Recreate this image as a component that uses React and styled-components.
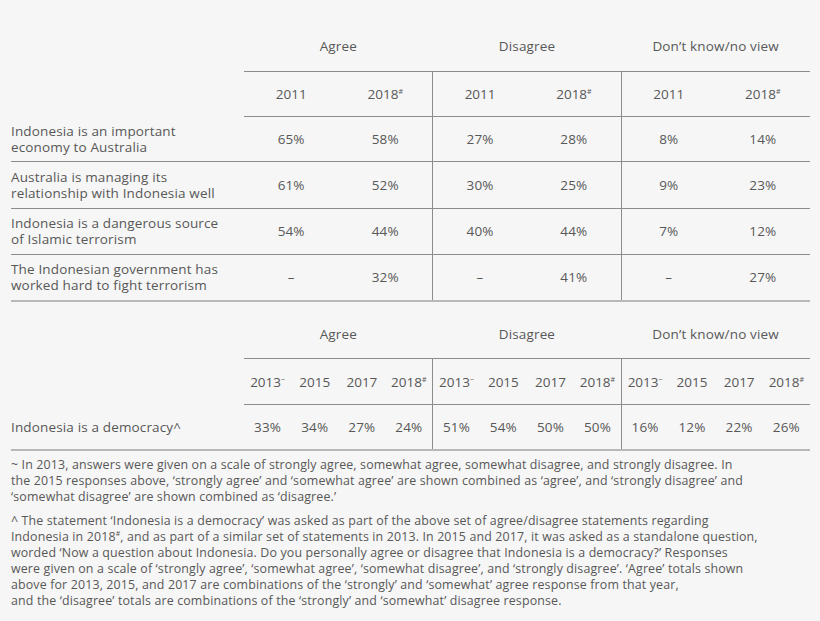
import React from 'react';
import styled, { createGlobalStyle } from 'styled-components';

const GlobalStyle = createGlobalStyle`
  html, body {
    margin: 0;
    padding: 0;
    background: #f6f6f6;
  }
  body {
    font-family: 'Open Sans', 'Liberation Sans', sans-serif;
    color: #585858;
  }
`;

const Page = styled.div`
  width: 820px;
  height: 621px;
  box-sizing: border-box;
  padding: 22px 10px 0 11px;
  overflow: hidden;
`;

const Table = styled.table`
  width: 799px;
  border-collapse: collapse;
  table-layout: fixed;
  font-size: 13.5px;
  letter-spacing: 0.15px;
  margin-bottom: ${(p) => p.$gap || 0}px;
`;

const LabelCol = styled.col`
  width: 233px;
`;

const GroupHead = styled.th`
  height: 48.5px;
  padding: 0;
  font-weight: 400;
  text-align: center;
  border-bottom: 1.5px solid #8c8c8c;
`;

const Blank = styled.th`
  padding: 0;
`;

const YearCell = styled.th`
  height: 44.2px;
  padding: 0;
  font-weight: 400;
  text-align: center;
  white-space: nowrap;
  letter-spacing: 0;
  border-bottom: 1.5px solid #8c8c8c;
  border-left: ${(p) => (p.$split ? '1.5px solid #8c8c8c' : 'none')};
`;

const RowLabel = styled.td`
  height: 45.2px;
  padding: 0;
  line-height: 16px;
  vertical-align: middle;
  white-space: nowrap;
  border-bottom: ${(p) => (p.$last ? '2px solid #b8b8b8' : '1.5px solid #8c8c8c')};
`;

const Cell = styled.td`
  padding: 0;
  text-align: center;
  vertical-align: middle;
  white-space: nowrap;
  border-bottom: ${(p) => (p.$last ? '2px solid #b8b8b8' : '1.5px solid #8c8c8c')};
  border-left: ${(p) => (p.$split ? '1.5px solid #8c8c8c' : 'none')};
`;

const Sup = styled.sup`
  font-size: 7px;
  vertical-align: 5px;
  line-height: 0;
`;

const Notes = styled.div`
  margin-top: 6px;
  font-size: 12.4px;
  letter-spacing: 0.15px;
  line-height: 16px;
`;

const Note = styled.p`
  margin: 0 0 8px;
  white-space: nowrap;
`;

const groups = ['Agree', 'Disagree', 'Don\u2019t know/no view'];

const rows1 = [
  ['Indonesia is an important', 'economy to Australia', ['65%', '58%', '27%', '28%', '8%', '14%']],
  ['Australia is managing its', 'relationship with Indonesia well', ['61%', '52%', '30%', '25%', '9%', '23%']],
  ['Indonesia is a dangerous source', 'of Islamic terrorism', ['54%', '44%', '40%', '44%', '7%', '12%']],
  ['The Indonesian government has', 'worked hard to fight terrorism', ['\u2013', '32%', '\u2013', '41%', '\u2013', '27%']],
];

const years2 = [['2013', '~'], ['2015'], ['2017'], ['2018', '#']];
const values2 = ['33%', '34%', '27%', '24%', '51%', '54%', '50%', '50%', '16%', '12%', '22%', '26%'];

const Year = ({ y }) => (
  <>
    {y[0]}
    {y[1] && <Sup>{y[1]}</Sup>}
  </>
);

export default function App() {
  const years1 = [['2011'], ['2018', '#']];
  return (
    <>
      <GlobalStyle />
      <Page>
        <Table $gap={8}>
          <colgroup>
            <LabelCol />
            {Array.from({ length: 6 }).map((_, i) => <col key={i} />)}
          </colgroup>
          <thead>
            <tr>
              <Blank />
              {groups.map((g) => (
                <GroupHead key={g} colSpan={2}>{g}</GroupHead>
              ))}
            </tr>
            <tr>
              <Blank />
              {groups.flatMap((g, gi) =>
                years1.map((y, yi) => (
                  <YearCell key={g + yi} $split={gi > 0 && yi === 0}>
                    <Year y={y} />
                  </YearCell>
                ))
              )}
            </tr>
          </thead>
          <tbody>
            {rows1.map(([a, b, vals], ri) => (
              <tr key={a}>
                <RowLabel $last={ri === rows1.length - 1}>
                  {a}
                  <br />
                  {b}
                </RowLabel>
                {vals.map((v, i) => (
                  <Cell key={i} $split={i === 2 || i === 4} $last={ri === rows1.length - 1}>
                    {v}
                  </Cell>
                ))}
              </tr>
            ))}
          </tbody>
        </Table>

        <Table>
          <colgroup>
            <LabelCol />
            {Array.from({ length: 12 }).map((_, i) => <col key={i} />)}
          </colgroup>
          <thead>
            <tr>
              <Blank />
              {groups.map((g) => (
                <GroupHead key={g} colSpan={4}>{g}</GroupHead>
              ))}
            </tr>
            <tr>
              <Blank />
              {groups.flatMap((g, gi) =>
                years2.map((y, yi) => (
                  <YearCell key={g + yi} $split={gi > 0 && yi === 0}>
                    <Year y={y} />
                  </YearCell>
                ))
              )}
            </tr>
          </thead>
          <tbody>
            <tr>
              <RowLabel $last>Indonesia is a democracy^</RowLabel>
              {values2.map((v, i) => (
                <Cell key={i} $split={i === 4 || i === 8} $last>
                  {v}
                </Cell>
              ))}
            </tr>
          </tbody>
        </Table>

        <Notes>
          <Note>
            ~ In 2013, answers were given on a scale of strongly agree, somewhat agree, somewhat disagree, and strongly disagree. In
            <br />
            the 2015 responses above, ‘strongly agree’ and ‘somewhat agree’ are shown combined as ‘agree’, and ‘strongly disagree’ and
            <br />
            ‘somewhat disagree’ are shown combined as ‘disagree.’
          </Note>
          <Note>
            ^ The statement ‘Indonesia is a democracy’ was asked as part of the above set of agree/disagree statements regarding
            <br />
            Indonesia in 2018<Sup>#</Sup>, and as part of a similar set of statements in 2013. In 2015 and 2017, it was asked as a standalone question,
            <br />
            worded ‘Now a question about Indonesia. Do you personally agree or disagree that Indonesia is a democracy?’ Responses
            <br />
            were given on a scale of ‘strongly agree’, ‘somewhat agree’, ‘somewhat disagree’, and ‘strongly disagree’. ‘Agree’ totals shown
            <br />
            above for 2013, 2015, and 2017 are combinations of the ‘strongly’ and ‘somewhat’ agree response from that year,
            <br />
            and the ‘disagree’ totals are combinations of the ‘strongly’ and ‘somewhat’ disagree response.
          </Note>
        </Notes>
      </Page>
    </>
  );
}
